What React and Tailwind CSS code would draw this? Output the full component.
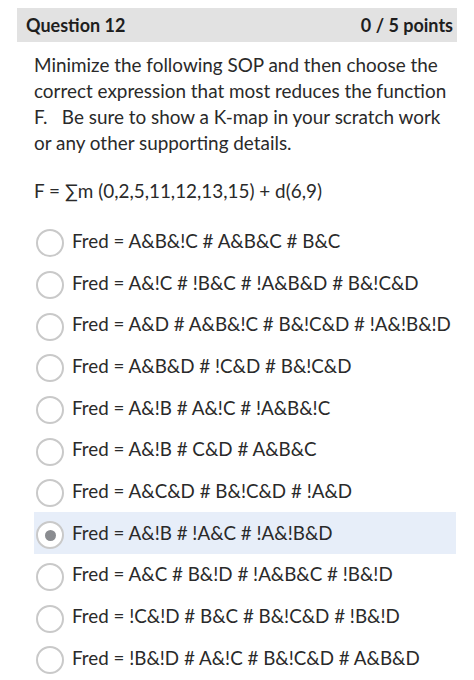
import React from "react";

const options = [
  "Fred = A&B&!C # A&B&C # B&C",
  "Fred = A&!C # !B&C # !A&B&D # B&!C&D",
  "Fred = A&D # A&B&!C # B&!C&D # !A&!B&!D",
  "Fred = A&B&D # !C&D # B&!C&D",
  "Fred = A&!B # A&!C # !A&B&!C",
  "Fred = A&!B # C&D # A&B&C",
  "Fred = A&C&D # B&!C&D # !A&D",
  "Fred = A&!B # !A&C # !A&!B&D",
  "Fred = A&C # B&!D # !A&B&C # !B&!D",
  "Fred = !C&!D # B&C # B&!C&D # !B&!D",
  "Fred = !B&!D # A&!C # B&!C&D # A&B&D",
];

export default function App() {
  return (
    <div className="w-[474px] h-[680px] bg-white overflow-hidden text-[#2a2a2a]" style={{ fontFamily: "Lato, 'Noto Sans', sans-serif" }}>
      <div className="pt-[8px] px-[17px]">
        <div className="h-[34px] bg-[#e2e2e2] flex items-center justify-between pl-[9px] pr-[4px] text-[18px] font-bold text-[#1e1e1e]">
          <span>Question 12</span>
          <span>0 / 5 points</span>
        </div>
      </div>
      <div className="pl-[34px] pr-[14px] pt-[10px] text-[18.9px] leading-[26px]">
        <p>
          Minimize the following SOP and then choose the correct expression that most reduces the function F.&nbsp;&nbsp; Be sure to show a K-map in your scratch work or any other supporting details.
        </p>
        <p className="mt-[22px]">F = ∑m (0,2,5,11,12,13,15) + d(6,9)</p>
      </div>
      <div className="mt-[16px] pl-[34px] pr-[18px] flex flex-col">
        {options.map((o, i) => {
          const sel = i === 7;
          return (
            <div
              key={i}
              className={`h-[41.7px] flex items-center pl-[2px] ${sel ? "bg-[#e7eef9]" : ""}`}
            >
              <div className="w-[28px] h-[28px] rounded-full border-2 border-[#c9c9c9] bg-white flex items-center justify-center mt-[5px] shrink-0">
                {sel && <div className="w-[11px] h-[11px] rounded-full bg-[#8a8c90]" />}
              </div>
              <span className="ml-[8px] text-[18.8px] leading-[26px] whitespace-nowrap">{o}</span>
            </div>
          );
        })}
      </div>
    </div>
  );
}
